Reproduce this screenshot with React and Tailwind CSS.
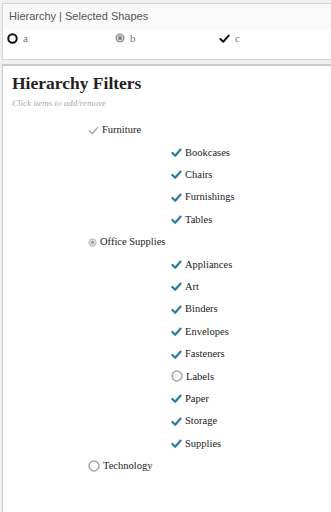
const TREE = [
  { label: "Furniture", level: 1, icon: "partialCheck" },
  { label: "Bookcases", level: 2, icon: "check" },
  { label: "Chairs", level: 2, icon: "check" },
  { label: "Furnishings", level: 2, icon: "check" },
  { label: "Tables", level: 2, icon: "check" },
  { label: "Office Supplies", level: 1, icon: "partial" },
  { label: "Appliances", level: 2, icon: "check" },
  { label: "Art", level: 2, icon: "check" },
  { label: "Binders", level: 2, icon: "check" },
  { label: "Envelopes", level: 2, icon: "check" },
  { label: "Fasteners", level: 2, icon: "check" },
  { label: "Labels", level: 2, icon: "empty" },
  { label: "Paper", level: 2, icon: "check" },
  { label: "Storage", level: 2, icon: "check" },
  { label: "Supplies", level: 2, icon: "check" },
  { label: "Technology", level: 1, icon: "empty" },
];

function Check({ color = "#2b7ba3", w = 2.4 }) {
  return (
    <svg width="11" height="11" viewBox="0 0 12 12" className="shrink-0">
      <path d="M1.5 6.5 L4.6 9.6 L10.5 2.8" fill="none" stroke={color} strokeWidth={w} strokeLinecap="round" strokeLinejoin="round" />
    </svg>
  );
}

function Ring({ color = "#a8a3a0", size = 12, w = 1.5 }) {
  return (
    <svg width={size} height={size} viewBox="0 0 12 12" className="shrink-0">
      <circle cx="6" cy="6" r={6 - w / 2 - 0.3} fill="none" stroke={color} strokeWidth={w} />
    </svg>
  );
}

function Dotted({ size = 9, dark = false }) {
  return (
    <svg width={size} height={size} viewBox="0 0 10 10" className="shrink-0">
      <circle cx="5" cy="5" r="4.6" fill={dark ? "#9a9a9a" : "#c9c4c2"} />
      <circle cx="5" cy="5" r="3.1" fill={dark ? "#d8d8d8" : "#e4e0de"} />
      <circle cx="5" cy="5" r="1.9" fill={dark ? "#7d7d7d" : "#a9a3a0"} />
    </svg>
  );
}

function TreeIcon({ kind }) {
  if (kind === "check") return <Check />;
  if (kind === "partialCheck") return <Check color="#b0aaa8" w={1.6} />;
  if (kind === "partial") return <Dotted />;
  return <Ring />;
}

export default function App() {
  return (
    <div className="w-[331px] h-[512px] overflow-hidden bg-[#f0f0f0] pt-[3px] pl-[2px]" style={{ fontFamily: '"Liberation Serif", serif' }}>
      {/* legend panel */}
      <div className="h-[57px] bg-white border border-r-0 border-[#d6d6d6]">
        <div className="h-[25px] bg-[#f9f9f9] flex items-center pl-[6px] text-[11px] text-[#555]" style={{ fontFamily: '"Liberation Sans", sans-serif' }}>
          Hierarchy | Selected Shapes
        </div>
        <div className="flex items-center h-[18px] text-[11px] text-[#777]">
          <div className="flex items-center gap-[5px] w-[108px] pl-[4px]">
            <Ring color="#111" size={11} w={2.2} />
            <span>a</span>
          </div>
          <div className="flex items-center gap-[5px] w-[107px] pl-[4px]">
            <Dotted size={10} dark />
            <span>b</span>
          </div>
          <div className="flex items-center gap-[5px] pl-[1px]">
            <Check color="#111" w={2.2} />
            <span>c</span>
          </div>
        </div>
      </div>

      {/* filter panel */}
      <div className="mt-[4px] h-[460px] bg-white border-l border-t-2 border-[#c9c9c9]">
        <div className="pl-[9px] pt-[5px]">
          <h1 className="text-[17.5px] font-bold text-[#222] leading-[24px]">Hierarchy Filters</h1>
          <p className="text-[9px] italic text-[#aaa] leading-[12px] mt-[2px]">Click items to add/remove</p>
        </div>
        <div className="mt-[10px]">
          {TREE.map((item) => (
            <div
              key={item.label}
              className={`flex items-center h-[22.4px] gap-[3px] text-[10.5px] text-[#222] ${item.level === 1 ? "pl-[85px]" : "pl-[168px]"}`}
            >
              <TreeIcon kind={item.icon} />
              <span>{item.label}</span>
            </div>
          ))}
        </div>
      </div>
    </div>
  );
}
